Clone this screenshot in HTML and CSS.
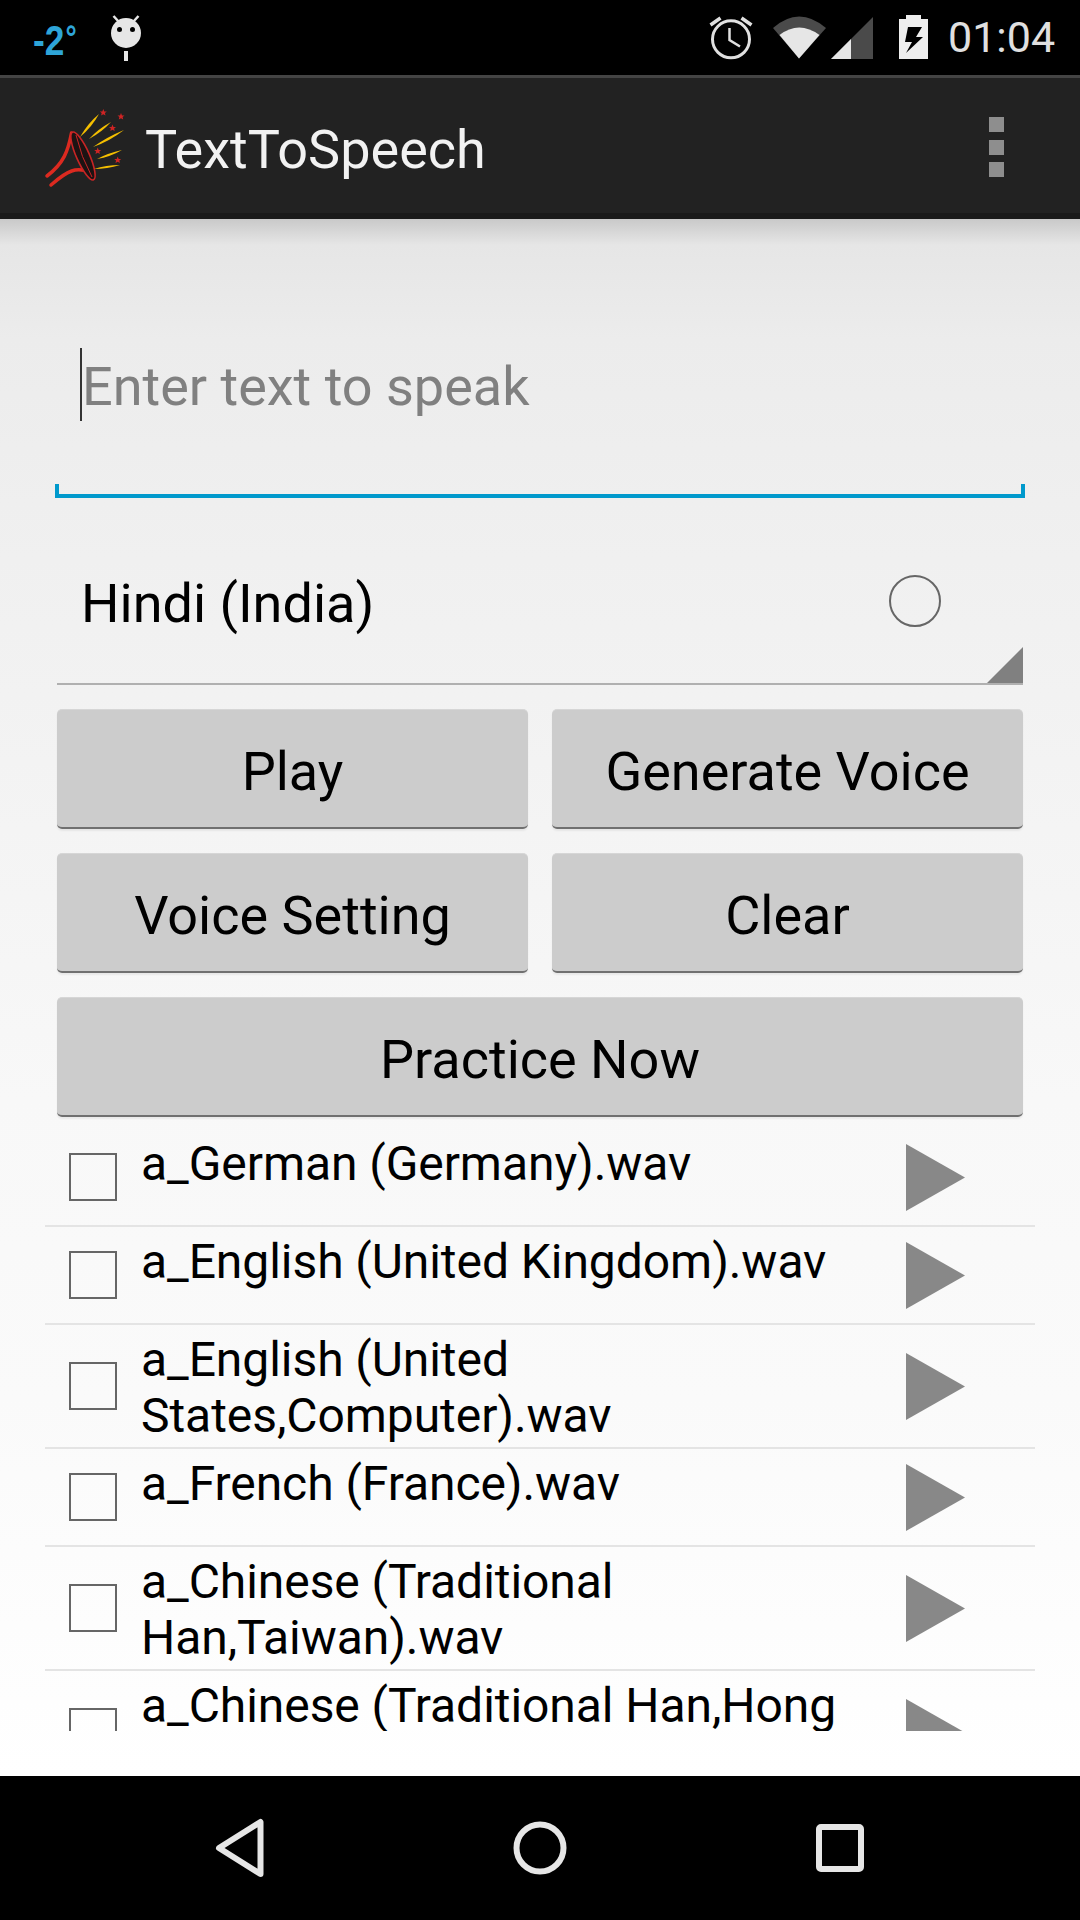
FILE: index.html
```html
<!DOCTYPE html>
<html lang="en">
<head>
<meta charset="utf-8">
<title>TextToSpeech</title>
<link rel="stylesheet" href="styles.css">
</head>
<body>
<div class="screen">
  <header class="statusbar">
    <div class="status-left">
      <span class="temp"><span class="temp-text">-2<sup class="deg">°</sup></span></span>
      <svg class="ic-android" viewBox="104 0 44 75" width="44" height="75"><circle cx="126" cy="33" r="15" fill="#e6e6e6"/><path d="M113.500 16 L119 22 M138.500 16 L133 22" stroke="#e6e6e6" stroke-width="2.500"/><circle cx="119.500" cy="29.500" r="2.500" fill="#000"/><circle cx="132.500" cy="29.500" r="2.500" fill="#000"/><rect x="124" y="51" width="4" height="10" fill="#e6e6e6"/></svg>
    </div>
    <div class="status-right">
      <svg class="ic-alarm" viewBox="708 0 46 75" width="46" height="75"><circle cx="731" cy="39.300" r="18.500" fill="none" stroke="#e0e0e0" stroke-width="3"/><path d="M710.500 25 L720.500 18 M741.500 18 L751.500 25" stroke="#e0e0e0" stroke-width="3.500" fill="none"/><path d="M729.500 28 V40 L740 46.500" stroke="#e0e0e0" stroke-width="2.500" fill="none"/></svg>
      <svg class="ic-wifi" viewBox="770 0 60 75" width="60" height="75"><path d="M799 58.500 L773 28 Q799 5 826 28 Z" fill="#4a4a4a"/><path d="M799 58.500 L779.500 35 Q799 20 819.500 35 Z" fill="#e6e6e6"/></svg>
      <svg class="ic-signal" viewBox="830 0 45 75" width="45" height="75"><path d="M831 59 H873 V17 Z" fill="#4a4a4a"/><path d="M831 59 H851 V39 Z" fill="#e6e6e6"/></svg>
      <svg class="ic-battery" viewBox="897 0 34 75" width="34" height="75"><path d="M906 15 H921 V19 H928 V59 H899 V19 H906 Z" fill="#eee"/><path d="M908 27 H922 L916 37 H923 L906 53 L912 42 H905 Z" fill="#000"/></svg>
      <span class="clock">01:04</span>
    </div>
  </header>

  <div class="actionbar">
    <svg class="logo" viewBox="0 0 110 110" width="110" height="110">
      <defs><path id="star" d="M0 -3.600 L1 -1.100 L3.500 -1 L1.600 .6 L2.200 3.100 L0 1.700 L-2.200 3.100 L-1.600 .6 L-3.500 -1 L-1 -1.100 Z"/></defs>
      <path d="M41.500 42 C38 60 34 72 17 85" fill="none" stroke="#dc2a20" stroke-width="3.500" stroke-linecap="round"/>
      <path d="M60 81 C46 76 38 79 21 94" fill="none" stroke="#dc2a20" stroke-width="3.500" stroke-linecap="round"/>
      <ellipse cx="53" cy="65" rx="6.500" ry="26" transform="rotate(-24 53 65)" fill="#1d1313" stroke="#c92525" stroke-width="1.600"/>
      <path d="M46 44 Q51 66 62 86" fill="none" stroke="#c92525" stroke-width="1"/>
      <g fill="#f5bf00">
        <path d="M50 46 Q58 32 69 23 Q62 36 50 46 Z"/>
        <path d="M59 48 Q68 38 81 31 Q72 41 59 48 Z"/>
        <path d="M63 56 Q77 46 94 39 Q80 50 63 56 Z"/>
        <path d="M67 68 Q78 62 92 59 Q80 66 67 68 Z"/>
        <path d="M64 78 Q76 74 90 74 Q77 78 64 78 Z"/>
      </g>
      <g fill="#cf2424">
        <use href="#star" x="73.300" y="21.500"/>
        <use href="#star" x="91" y="25.500"/>
        <use href="#star" x="82.500" y="37"/>
        <use href="#star" x="67.700" y="60"/>
        <use href="#star" x="87.700" y="69"/>
      </g>
    </svg>
    <h1 class="title">TextToSpeech</h1>
    <div class="overflow"><i></i><i></i><i></i></div>
  </div>

  <main class="content">
    <div class="editor">
      <span class="caret"></span><span class="placeholder">Enter text to speak</span>
    </div>

    <div class="spinner">
      <span class="spinner-label">Hindi (India)</span>
      <span class="radio"></span>
      <svg class="spinner-arrow" viewBox="0 0 36 36" width="36" height="36"><path d="M36 0 V36 H0 Z" fill="#808080"/></svg>
    </div>

    <div class="buttons">
      <button class="btn">Play</button>
      <button class="btn">Generate Voice</button>
      <button class="btn">Voice Setting</button>
      <button class="btn">Clear</button>
      <button class="btn btn-wide">Practice Now</button>
    </div>

    <ul class="files">
      <li class="file"><span class="check"></span><span class="name">a_German (Germany).wav</span><svg class="play" viewBox="0 0 59 67" width="59" height="67"><path d="M0 0 L59 33.500 L0 67 Z"/></svg></li>
      <li class="file"><span class="check"></span><span class="name">a_English (United Kingdom).wav</span><svg class="play" viewBox="0 0 59 67" width="59" height="67"><path d="M0 0 L59 33.500 L0 67 Z"/></svg></li>
      <li class="file"><span class="check"></span><span class="name">a_English (United States,Computer).wav</span><svg class="play" viewBox="0 0 59 67" width="59" height="67"><path d="M0 0 L59 33.500 L0 67 Z"/></svg></li>
      <li class="file"><span class="check"></span><span class="name">a_French (France).wav</span><svg class="play" viewBox="0 0 59 67" width="59" height="67"><path d="M0 0 L59 33.500 L0 67 Z"/></svg></li>
      <li class="file"><span class="check"></span><span class="name">a_Chinese (Traditional Han,Taiwan).wav</span><svg class="play" viewBox="0 0 59 67" width="59" height="67"><path d="M0 0 L59 33.500 L0 67 Z"/></svg></li>
      <li class="file"><span class="check"></span><span class="name">a_Chinese (Traditional Han,Hong Kong).wav</span><svg class="play" viewBox="0 0 59 67" width="59" height="67"><path d="M0 0 L59 33.500 L0 67 Z"/></svg></li>
    </ul>
  </main>

  <nav class="navbar">
    <svg class="nav-back" viewBox="0 0 50 60" width="50" height="60"><path d="M45.500 4 V56 L4 30 Z" fill="none" stroke="#e6e6e6" stroke-width="6" stroke-linejoin="round"/></svg>
    <svg class="nav-home" viewBox="0 0 54 54" width="54" height="54"><circle cx="27" cy="27" r="23.500" fill="none" stroke="#e6e6e6" stroke-width="6"/></svg>
    <svg class="nav-recent" viewBox="0 0 50 50" width="50" height="50"><rect x="4" y="4" width="42" height="42" rx="2" fill="none" stroke="#e6e6e6" stroke-width="6"/></svg>
  </nav>
</div>
</body>
</html>
```
FILE: styles.css
```css
* { box-sizing: border-box; }
html, body { margin: 0; padding: 0; }
body { font-family: Roboto, "Noto Sans", sans-serif; background: #000; }

.screen { width: 1080px; height: 1920px; display: flex; flex-direction: column; overflow: hidden; }

/* status bar */
.statusbar { height: 75px; background: #000; display: flex; justify-content: space-between; flex: none; }
.status-left { display: flex; align-items: flex-start; padding-left: 33px; }
.temp { font-family: "Liberation Sans", Roboto, sans-serif; font-weight: 700; font-size: 42px; line-height: 81px; color: #2ea5d8; width: 71px; }
.temp-text { display: inline-block; transform: scaleX(.84); transform-origin: left center; white-space: nowrap; }
.deg { font-family: Roboto, sans-serif; font-size: 42px; line-height: 0; vertical-align: -1px; font-weight: 400; }
.status-right { display: flex; align-items: flex-start; padding-right: 24px; }
.ic-alarm { margin-right: 16px; }
.ic-battery { margin-left: 22px; margin-right: 17px; }
.clock { width: 108px; font-size: 43px; line-height: 75px; color: #e0e0e0; }

/* action bar */
.actionbar { height: 144px; flex: none; background: #222; border-top: 3px solid #444; border-bottom: 6px solid #1a1a1a; display: flex; align-items: center; padding-left: 30px; padding-right: 76px; }
.title { margin: 0 0 0 5px; padding-top: 7px; flex: 1; font-weight: 400; font-size: 54px; color: #f2f2f2; }
.overflow { display: flex; flex-direction: column; gap: 7.500px; padding-top: 3px; }
.overflow i { display: block; width: 15px; height: 15px; background: #8e8e8e; }

/* content */
.content { flex: 1; background: linear-gradient(#c9c9c9 0, #e6e6e6 26px, #ececec 120px, #f0f0f0 340px, #f8f8f8 880px, #fafafa 1180px, #fff 1557px); padding: 121px 45px 0; display: flex; flex-direction: column; }

.editor { height: 158px; margin: 0 10px; padding-left: 25px; display: flex; align-items: flex-start; position: relative; border-bottom: 4px solid #0099cc; }
.editor::before, .editor::after { content: ""; position: absolute; bottom: 0; width: 4px; height: 10px; background: #0099cc; }
.editor::before { left: 0; }
.editor::after { right: 0; }
.caret { width: 2px; height: 73px; margin-top: 8px; background: #333; flex: none; }
.placeholder { font-size: 54px; line-height: 73px; margin-top: 10px; color: #808080; }

.spinner { height: 187px; margin: 0 12px; border-bottom: 2px solid #b0b0b0; display: flex; align-items: flex-start; padding-left: 24px; position: relative; }
.spinner-label { flex: 1; font-size: 54px; line-height: 64px; margin-top: 74px; color: #000; }
.radio { width: 52px; height: 52px; margin-top: 77px; margin-right: 82px; border: 2px solid #666; border-radius: 50%; }
.spinner-arrow { position: absolute; right: 0; bottom: 0; }

.buttons { margin: 24px 12px 0; display: grid; grid-template-columns: 471px 471px; column-gap: 24px; row-gap: 24px; }
.btn { height: 120px; padding: 5px 0 0; border: 0; border-top: 1px solid #d6d6d6; border-bottom: 2px solid #707070; border-radius: 5px; background: #ccc; font-family: inherit; font-size: 54px; color: #000; box-shadow: 0 2px 2px rgba(0,0,0,.06); }
.btn-wide { grid-column: 1 / 3; }

.files { list-style: none; margin: 12px 0 0; padding: 0; height: 602px; overflow: hidden; }
.file { display: flex; align-items: center; min-height: 98px; padding: 0 49px 0 24px; border-bottom: 2px solid #e4e4e4; }
.check { width: 48px; height: 48px; border: 2px solid #666; flex: none; margin-right: 24px; }
.name { flex: 1; max-width: 740px; align-self: flex-start; margin: 7px 0 3px; font-size: 48px; line-height: 56px; letter-spacing: -.06px; color: #000; }
.play { flex: none; fill: #888; margin-left: 25px; }

/* navigation bar */
.navbar { height: 144px; flex: none; background: #000; display: flex; align-items: center; justify-content: center; }
.nav-back { margin-right: 248px; }
.nav-recent { margin-left: 248px; }
```
